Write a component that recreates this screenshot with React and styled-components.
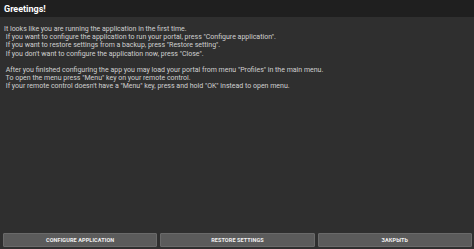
import React from 'react'
import styled, { createGlobalStyle } from 'styled-components'

const GlobalStyle = createGlobalStyle`
  html, body {
    margin: 0;
    padding: 0;
    background: #2f2f2f;
  }
  #root {
    height: 249px;
  }
`;

/* Dialog texts */
const lines = [
  "It looks like you are running the application in the first time.",
  " If you want to configure the application to run your portal, press \"Configure application\".",
  " If you want to restore settings from a backup, press \"Restore setting\".",
  " If you don't want to configure the application now, press \"Close\".",
  "",
  " After you finished configuring the app you may load your portal from menu \"Profiles\" in the main menu.",
  " To open the menu press \"Menu\" key on your remote control.",
  " If your remote control doesn't have a \"Menu\" key, press and hold \"OK\" instead to open menu.",
];

const buttons = ["CONFIGURE APPLICATION", "RESTORE SETTINGS", "ЗАКРЫТЬ"];

export default function App() {
  return (
    <>
      <GlobalStyle />
      <Dialog>
        <Header>Greetings!</Header>
        <Body>
          {lines.map((l, i) => <Line key={i}>{l || '\u00a0'}</Line>)}
        </Body>
        <ButtonRow>
          {buttons.map(b => <Button key={b}>{b}</Button>)}
        </ButtonRow>
      </Dialog>
    </>
  )
}

const Dialog = styled.div`
  display: flex;
  flex-direction: column;
  height: 249px;
  width: 474px;
  background: #2f2f2f;
  font-family: Roboto, "Noto Sans", sans-serif;
`;

const Header = styled.div`
  height: 17px;
  flex: none;
  display: flex;
  align-items: center;
  padding-left: 4px;
  background: #1f1f1f;
  color: #ffffff;
  font-size: 9px;
  font-weight: 700;
`;

const Body = styled.div`
  flex: 1;
  padding: 8px 4px 0 4px;
`;

const Line = styled.div`
  color: #cfcfcf;
  font-size: 7px;
  line-height: 8.2px;
  white-space: pre;
`;

const ButtonRow = styled.div`
  display: grid;
  grid-template-columns: 1fr 1fr 1fr;
  gap: 3px;
  padding: 0 2px 2px 3px;
`;

const Button = styled.button`
  height: 14px;
  padding: 0;
  background: #5b5b5b;
  border: 1px solid #6a6a6a;
  border-radius: 1px;
  color: #f0f0f0;
  font-family: Roboto, "Noto Sans", sans-serif;
  font-size: 5.5px;
  font-weight: 700;
  letter-spacing: 0.1px;
`;
